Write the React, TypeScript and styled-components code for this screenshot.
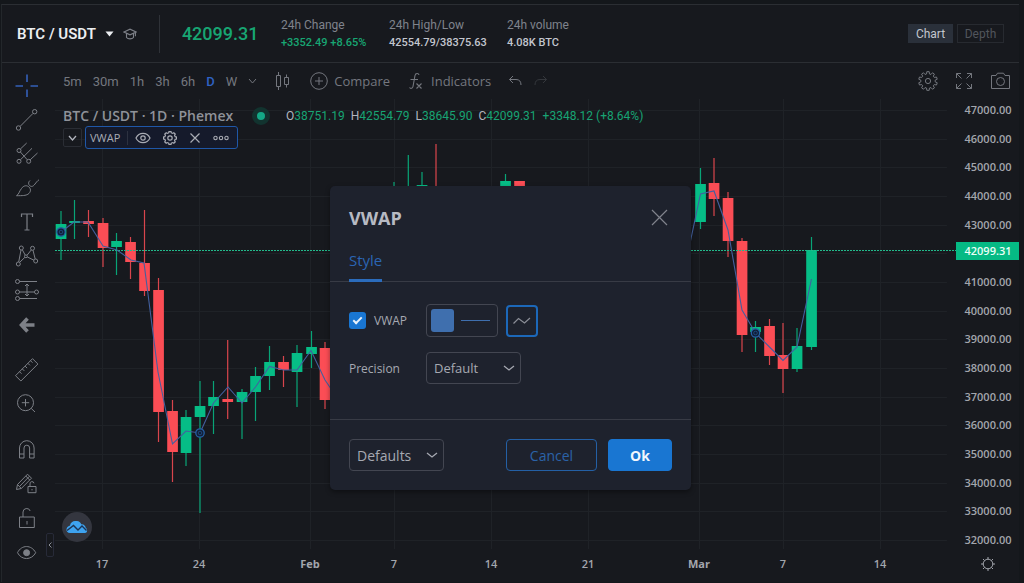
import React from "react";
import styled, { createGlobalStyle } from "styled-components";

const ui = '"Open Sans", "Noto Sans", sans-serif';
const din = 'Roboto, "Liberation Sans", sans-serif';

const GlobalStyle = createGlobalStyle`
  *, *::before, *::after { box-sizing: border-box; }
  body { margin: 0; background: #14171b; color: #b2b5be; font-family: ${ui}; font-size: 12px; }
  button, select, input { font: inherit; color: inherit; margin: 0; }
  button { background: none; border: 0; padding: 0; display: inline-flex; align-items: center; justify-content: center; cursor: pointer; }
  h1, h2, p, dl, dd, dt { margin: 0; font-weight: inherit; font-size: inherit; }
  svg { display: block; flex: none; }
`;

const Page = styled.div`
  min-height: 100vh;
  padding: 4px 5px 1px 1px;
  display: flex;
  position: relative;
`;

const Panel = styled.main`
  flex: 1;
  min-width: 0;
  display: flex;
  flex-direction: column;
  background: #17191e;
  border-top: 1px solid #2b2e33;
  border-left: 1px solid #23272b;
`;

const Header = styled.header`
  height: 58px;
  display: flex;
  align-items: center;
  padding-left: 15px;
  padding-right: 15px;
  border-bottom: 1px solid #2b2e33;
  font-family: ${din};
`;

const PairButton = styled.button`
  gap: 9px;
  font-size: 15px;
  font-weight: 600;
  color: #eceef1;
`;

const HeaderDivider = styled.span`
  width: 1px;
  height: 38px;
  margin-left: 22px;
  background: #2f3238;
`;

const LastPrice = styled.strong`
  width: 77px;
  margin-left: 22px;
  font-size: 18px;
  font-weight: 500;
  color: #17a673;
`;

const Stats = styled.dl`
  display: flex;
  gap: 22px;
  margin-left: 22px;
`;

const Stat = styled.div<{ $up?: boolean; $wide?: boolean }>`
  width: ${(p) => (p.$wide ? 96 : 86)}px;
  white-space: nowrap;
  dt { font-size: 12px; line-height: 18px; color: #7f838c; }
  dd { font-size: 11px; line-height: 18px; font-weight: 500; color: ${(p) => (p.$up ? "#17a673" : "#c3c6ce")}; }
`;

const ViewSwitch = styled.div`
  display: flex;
  gap: 4px;
  margin-left: auto;
`;

const ViewButton = styled.button<{ $active?: boolean }>`
  height: 19px;
  width: ${(p) => (p.$active ? 45 : 47)}px;
  font-size: 12px;
  border: 1px solid ${(p) => (p.$active ? "#2a303a" : "#272a30")};
  background: ${(p) => (p.$active ? "#2a303a" : "transparent")};
  color: ${(p) => (p.$active ? "#c3c6ce" : "#51555c")};
`;

const Workspace = styled.div`
  flex: 1;
  display: flex;
`;

const Tools = styled.nav`
  width: 53px;
  padding: 6px 0 0 8px;
  display: flex;
  flex-direction: column;
  gap: 12px;
  color: #7d8087;
`;

const ToolGroup = styled.div`
  display: flex;
  flex-direction: column;
`;

const ToolButton = styled.button<{ $active?: boolean }>`
  width: 34px;
  height: 34px;
  color: ${(p) => (p.$active ? "#3560b8" : "inherit")};
`;

const ChartColumn = styled.section`
  flex: 1;
  min-width: 0;
  display: flex;
  flex-direction: column;
`;

const ChartToolbar = styled.div`
  height: 36px;
  display: flex;
  align-items: center;
  padding: 0 8px;
  color: #74777e;
  font-size: 13px;
`;

const Intervals = styled.div`
  display: flex;
  gap: 11px;
  font-family: ${din};
  font-size: 13px;
`;

const Interval = styled.button<{ $active?: boolean }>`
  color: ${(p) => (p.$active ? "#2f62c4" : "inherit")};
  font-weight: ${(p) => (p.$active ? 500 : 400)};
`;

const ToolbarGroup = styled.div<{ $gap: number; $start?: number }>`
  display: flex;
  align-items: center;
  gap: ${(p) => p.$gap}px;
  margin-left: ${(p) => (p.$start ? p.$start + "px" : "auto")};
`;

const LabelButton = styled.button`
  gap: 6px;
`;

const ChartBody = styled.div`
  flex: 1;
  display: flex;
`;

const Plot = styled.div`
  flex: 1;
  min-width: 0;
  position: relative;
`;

const PlotSvg = styled.svg`
  width: 100%;
  height: 478px;
  text { font: 600 11px ${ui}; fill: #a3a6ad; text-anchor: middle; }
  .month { font-weight: 700; }
`;

const Legend = styled.div`
  position: absolute;
  top: 7px;
  left: 8px;
  display: flex;
  flex-direction: column;
  gap: 3px;
`;

const LegendRow = styled.div`
  display: flex;
  align-items: center;
  height: 19px;
  white-space: nowrap;
`;

const Symbol = styled.h1`
  width: 189px;
  font-size: 14px;
  font-weight: 600;
  color: #8f9299;
`;

const StatusDot = styled.span`
  width: 18px;
  height: 18px;
  border-radius: 50%;
  border: 5px solid #12332f;
  background: #14a886;
`;

const Ohlc = styled.p`
  display: flex;
  gap: 6px;
  margin-left: 16px;
  font-family: ${din};
  font-size: 12px;
  color: #18a474;
  b { font-weight: 400; color: #b2b5be; }
`;

const StudyToggle = styled.button`
  width: 19px;
  height: 19px;
  border: 1px solid #2a2d34;
  border-radius: 2px;
  color: #b2b5be;
`;

const Study = styled.div`
  display: flex;
  align-items: center;
  gap: 12px;
  width: 153px;
  height: 23px;
  margin-left: 3px;
  padding-left: 4px;
  border: 1px solid #1f57a8;
  border-radius: 3px;
  background: #151a2b;
  color: #a9acb4;
`;

const StudyName = styled.span`
  width: 38px;
  margin-right: -5px;
  border-right: 1px solid #2c3140;
  font-size: 11px;
  line-height: 14px;
`;

const Brand = styled.a`
  position: absolute;
  left: 7px;
  top: 413px;
  width: 30px;
  height: 30px;
  display: grid;
  place-items: center;
  border-radius: 50%;
  background: #34363f;
`;

const CollapseHandle = styled.button`
  position: absolute;
  left: -9px;
  top: 434px;
  width: 8px;
  height: 24px;
  border: 1px solid #272a38;
  border-radius: 2px;
  color: #8b8e96;
`;

const PriceAxis = styled.aside`
  position: relative;
  width: 63px;
  padding-top: 3px;
  display: flex;
  flex-direction: column;
  align-items: center;
  color: #a3a6ad;
  font-size: 11px;
  font-weight: 600;
`;

const PriceScale = styled.ol`
  list-style: none;
  margin: 0 0 8px;
  padding: 0 0 0 1px;
  height: 446px;
  display: flex;
  flex-direction: column;
  justify-content: space-between;
  line-height: 16px;
  li { height: 16px; }
`;

const PriceBadge = styled.output`
  position: absolute;
  top: 143px;
  left: 0;
  right: 0;
  padding-left: 1px;
  text-align: center;
  line-height: 18px;
  background: #05ba84;
  color: #eafff7;
`;

const Dialog = styled.section`
  position: absolute;
  left: calc(50% - 182px);
  top: 186px;
  width: 361px;
  border-radius: 5px;
  background: #1e222d;
  box-shadow: 0 2px 5px rgba(0, 0, 0, 0.4);
  color: #a6a9b2;
`;

const DialogHead = styled.div`
  display: flex;
  align-items: center;
  justify-content: space-between;
  height: 63px;
  padding: 0 23px 0 19px;
`;

const DialogTitle = styled.h2`
  font-size: 18px;
  font-weight: 700;
  color: #b7bac3;
`;

const CloseButton = styled.button`
  color: #80838c;
`;

const Tabs = styled.div`
  height: 33px;
  padding-left: 19px;
  display: flex;
  border-bottom: 1px solid #383b45;
`;

const Tab = styled.button`
  height: 33px;
  padding-bottom: 9px;
  border-bottom: 3px solid #2b6cbc;
  color: #2b65b3;
  font-size: 15px;
`;

const Fields = styled.div`
  display: flex;
  flex-direction: column;
  gap: 15px;
  padding: 22px 19px 35px;
  border-bottom: 1px solid #383b45;
`;

const Field = styled.div`
  display: flex;
  align-items: center;
  gap: 8px;
`;

const FieldLabel = styled.label`
  display: flex;
  align-items: center;
  gap: 8px;
  width: 69px;
  font-size: 12px;
`;

const CheckBox = styled.input`
  appearance: none;
  flex: none;
  width: 17px;
  height: 17px;
  border-radius: 3px;
  background: #1976d2;
  display: grid;
  place-items: center;
  &:checked::after {
    content: "";
    width: 9px;
    height: 5px;
    margin-bottom: 3px;
    border: solid #e8f1fb;
    border-width: 0 0 2px 2px;
    transform: rotate(-45deg);
  }
`;

const ColorButton = styled.button`
  width: 72px;
  height: 33px;
  gap: 7px;
  justify-content: flex-start;
  padding-left: 4px;
  border: 1px solid #434651;
  border-radius: 4px;
`;

const Swatch = styled.span`
  width: 23px;
  height: 23px;
  border-radius: 3px;
  background: #3f6fae;
`;

const LineSample = styled.span`
  width: 29px;
  height: 1px;
  background: #3f6fae;
`;

const PlotTypeButton = styled.button`
  width: 32px;
  height: 32px;
  border: 2px solid #1c68b9;
  border-radius: 4px;
  color: #8b8e97;
`;

const SelectBox = styled.div<{ $size: number }>`
  display: grid;
  align-items: center;
  width: 95px;
  font-size: ${(p) => p.$size}px;
  select, svg { grid-area: 1 / 1; }
  select {
    appearance: none;
    width: 100%;
    height: 32px;
    padding: 0 7px;
    border: 1px solid #434651;
    border-radius: 4px;
    background: transparent;
  }
  svg { justify-self: end; margin-right: 6px; pointer-events: none; }
`;

const DialogFoot = styled.div`
  display: flex;
  align-items: center;
  gap: 11px;
  height: 70px;
  padding: 0 19px;
`;

const ActionButton = styled.button<{ $primary?: boolean }>`
  height: 32px;
  width: ${(p) => (p.$primary ? 64 : 91)}px;
  margin-left: ${(p) => (p.$primary ? "0" : "auto")};
  border: 1px solid ${(p) => (p.$primary ? "#1976d2" : "#2460a5")};
  border-radius: 4px;
  background: ${(p) => (p.$primary ? "#1976d2" : "transparent")};
  color: ${(p) => (p.$primary ? "#f2f7fd" : "#2b62a8")};
  font-size: 14px;
  font-weight: ${(p) => (p.$primary ? 700 : 400)};
`;

type IconProps = { w?: number; h?: number; s?: number; children: React.ReactNode };
const Icon = ({ w = 28, h = w, s = 1, children }: IconProps) => (
  <svg width={w} height={h} viewBox={`0 0 ${w} ${h}`} fill="none" stroke="currentColor" strokeWidth={s} aria-hidden="true">
    {children}
  </svg>
);

const Chevron = ({ w = 12, s = 1.3 }: { w?: number; s?: number }) => (
  <Icon w={w} h={8} s={s}>
    <path d={`M1 2 L${w / 2} 6 L${w - 1} 2`} />
  </Icon>
);

type Tool = { name: string; art: React.ReactNode; s?: number };
const toolGroups: Tool[][] = [
  [
    { name: "Cross", s: 1.6, art: <path d="M14 2.5V10M14 17.5V25M2.5 14H10M17.5 14H25" /> },
    { name: "Trend line", art: <><circle cx="5.5" cy="22" r="2.2" /><circle cx="21.7" cy="5.7" r="2.2" /><path d="M7.2 20.3L20 7.4" /></> },
    { name: "Pitchfork", art: <><circle cx="6" cy="10.5" r="2" /><circle cx="6" cy="21.3" r="2" /><circle cx="15.7" cy="21.3" r="2" /><path d="M7.4 19.8L19 8.3M7.4 12L14.3 19.8M7.4 9L13.7 3M17.2 19.8L24.5 13" /></> },
    { name: "Brush", art: <><path d="M3.5 21.7C6 20.5 6 17.5 8.5 14.5C10.5 11.4 14 10.9 16.2 13.2C18.3 15.4 17.7 18.4 15 20.2C12.8 21.6 9.5 21.7 3.5 21.7Z" /><path d="M17 6.5C14.8 8.3 15.3 11.8 18.3 12.4C21.3 12.8 22.5 8 26 5.8" /></> },
    { name: "Text", s: 1.2, art: <path d="M8.5 9V6H19.5V9M14 6V22M11.5 22H16.5" /> },
    { name: "Patterns", art: <><circle cx="5.3" cy="22" r="2" /><circle cx="8.3" cy="6" r="2" /><circle cx="19.5" cy="6.3" r="2" /><circle cx="22.7" cy="19" r="2" /><circle cx="12.9" cy="14.3" r="1.4" /><path d="M5.7 20L8 8M9.3 7.8L12.2 13.1M14 13.3L18.3 7.9M20 8.3L22.2 17M6.6 20.4L11.9 15.3M14.2 14.9L20.9 18.2" /></> },
    { name: "Forecasting", art: <><circle cx="4.5" cy="5.5" r="2" /><circle cx="4.5" cy="16" r="2" /><circle cx="23.5" cy="16" r="2" /><circle cx="4.5" cy="22.5" r="2" /><path d="M6.5 5.5H24M6.5 16H21.5M6.5 22.5H24M14 8V20M12 10L14 8L16 10M12 18L14 20L16 18" /></> },
    { name: "Hide icons", s: 3.6, art: <path d="M21.5 15H9M14.5 8.5L8.5 15L14.5 21.5" /> },
  ],
  [
    { name: "Measure", art: <path d="M2.5 19.7L19.5 2.7L24.9 8L7.9 25ZM6.5 15.7L8.5 17.7M9.3 12.9L11.3 14.9M12.1 10.1L14.1 12.1M14.9 7.3L16.9 9.3M17.5 4.7L19.5 6.7" /> },
    { name: "Zoom in", art: <><circle cx="12.5" cy="12.7" r="8" /><path d="M18.2 18.4L22 22M12.5 9V16.4M8.8 12.7H16.2" /></> },
  ],
  [
    { name: "Magnet", art: <path d="M6.5 22V12A7.3 7.3 0 0 1 21.1 12V22H16.6V12A2.8 2.8 0 0 0 11 12V22ZM6.5 18H11M16.6 18H21.1" /> },
    { name: "Stay in drawing mode", art: <><path d="M3.5 19.5L4.5 14.5L14.5 4.2L18.5 8.2L8.3 18.5ZM4.5 14.5L8.3 18.5M6.5 16.5L16.5 6.2M12.8 6L16.7 10" /><path d="M15 16.5H23V22.7H15ZM17 16.5V14A2 2 0 0 1 21 13.3M19 19V20.4" /></> },
    { name: "Lock drawings", art: <path d="M6.5 13H21.3V23.5H6.5ZM10 13V8A3.7 3.7 0 0 1 17.2 7M14 17V20.5" /> },
    { name: "Hide drawings", art: <><path d="M4.5 14.7C8.5 6.5 18.5 6.5 22.7 14.7C18.5 22.5 8.5 22.5 4.5 14.7Z" /><circle cx="13.6" cy="14.7" r="3" fill="currentColor" /></> },
  ],
];

const gearPath = (cx: number, cy: number, r: number, R: number, n: number) => {
  const pts: string[] = [];
  for (let i = 0; i < n; i++) {
    const step = (Math.PI * 2) / n;
    const a = i * step - Math.PI / 2;
    [[-0.32, r], [-0.2, R], [0.2, R], [0.32, r]].forEach(([k, q]) => {
      pts.push(`${(cx + Math.cos(a + k * step) * q).toFixed(2)} ${(cy + Math.sin(a + k * step) * q).toFixed(2)}`);
    });
  }
  return `M${pts.join("L")}Z`;
};

/* Centre x, high, body top, body bottom, low, rising */
type Candle = [number, number, number, number, number, boolean];
const candles: Candle[] = [
  [61, 211, 224, 239, 260, true], [74.5, 200, 221, 223, 239, true], [88.5, 210, 221, 224, 237, false],
  [103, 218, 223, 248, 267, false], [116.5, 233, 241, 247, 275, true], [130.5, 237, 242, 262, 279, false],
  [144.5, 210, 263, 291, 296, false], [158.5, 278, 290, 412, 442, false], [172.5, 400, 411, 452, 482, false],
  [186, 410, 417, 453, 466, true], [200, 381, 406, 417, 513, true], [213.5, 381, 397, 406, 434, true],
  [227.7, 340, 399, 402, 419, false], [242, 389, 392, 402, 439, true], [255.5, 367, 376, 392, 421, true],
  [269.5, 346, 362, 376, 390, true], [283.5, 356, 362, 370, 387, false], [297, 345, 353, 372, 407, true],
  [311.5, 331, 347, 354, 368, true], [325, 342, 348, 400, 409, false],
  [394, 182, 210, 240, 250, true], [408.3, 155, 190, 210, 230, true], [422, 172, 185, 190, 210, true],
  [436, 144, 188, 230, 240, false], [505.5, 174, 181, 230, 240, true], [519.5, 181, 181, 200, 240, false],
  [700.5, 168, 184, 222, 229, true], [714, 158, 183, 199, 216, false], [728, 192, 198, 241, 257, false],
  [742, 238, 241, 335, 352, false], [755.5, 321, 327, 332, 352, true], [769.5, 319, 326, 356, 365, false],
  [783, 323, 355, 369, 393, false], [797, 328, 346, 369, 372, true], [811.5, 237, 250, 347, 350, true],
];

const vwapLeft = "61,232 74,222 88,222 103,246 117,250 131,260 144,263 158,372 172.5,444 186,431 200,433 213.5,403 228,387 242,403 255.5,387 269.5,366.5 283.5,370 297,370 311,350.5 325,380 340,402";
const vwapRight = "686,262 700.5,194 714,191 728,230 742,310 755.5,333 769.5,347 783,360.5 797,347 811.5,279";
const anchors = [[61, 232], [200, 433], [755.5, 333]];

const dates: [number, string][] = [
  [102, "17"], [199, "24"], [310, "Feb"], [394, "7"], [491, "14"], [588, "21"], [699, "Mar"], [783, "7"], [880, "14"],
];

const prices = Array.from({ length: 16 }, (_, i) => 47000 - i * 1000);
/* The last-price badge takes the place of this scale label */
const coveredPrice = 42000;

const PriceChart = () => (
  <PlotSvg role="img" aria-label="BTC / USDT daily candles with VWAP">
    <g stroke="#1f2227">
      {prices.map((p, i) => {
        const y = Math.round(11 + i * 28.67) + 0.5;
        return <line key={p} x1="0" x2="99%" y1={y} y2={y} />;
      })}
    </g>
    <g transform="translate(-55 -99)">
      {dates.map(([x, label]) => (
        <g key={x}>
          <line x1={x + 0.5} x2={x + 0.5} y1="99" y2="549" stroke="#1f2227" />
          <text x={x} y="568" className={label.length > 2 ? "month" : undefined}>{label}</text>
        </g>
      ))}
      {candles.map(([x, high, top, bottom, low, up]) => (
        <g key={x} fill={up ? "#06bd86" : "#fb4d55"}>
          <rect x={x - 0.6} y={high} width="1.2" height={low - high} opacity="0.85" />
          <rect x={x - 5.3} y={top} width="10.7" height={bottom - top} />
        </g>
      ))}
    </g>
    <line x1="0" x2="100%" y1="151.5" y2="151.5" stroke="#22b98a" strokeDasharray="2 1" />
    <g transform="translate(-55 -99)" fill="none" stroke="#43609f" strokeWidth="1.1">
      <polyline points={vwapLeft} />
      <polyline points={vwapRight} />
      {anchors.map(([x, y]) => (
        <g key={x} stroke="#2560a4">
          <circle cx={x} cy={y} r="4.2" fill="#111e36" strokeWidth="1.3" />
          <circle cx={x} cy={y} r="1.8" strokeWidth="0.6" />
        </g>
      ))}
    </g>
  </PlotSvg>
);

const ohlcValues = [["O", "38751.19"], ["H", "42554.79"], ["L", "38645.90"], ["C", "42099.31"]];

export default function App() {
  return (
    <>
      <GlobalStyle />
      <Page>
        <Panel>
          <Header>
            <PairButton>
              BTC / USDT
              <svg width="9" height="6" viewBox="0 0 9 6" aria-hidden="true"><path d="M0.5 0.5H8.5L4.5 5.5Z" fill="#eceef1" /></svg>
              <Icon w={14} h={12} s={1.1}>
                <g stroke="#7d8088"><path d="M1 4L7 1.2L13 4L7 6.8ZM3.5 5.5V9.5C5 11.3 9 11.3 10.5 9.5V5.5M12.4 4.5V8.2" /></g>
              </Icon>
            </PairButton>
            <HeaderDivider />
            <LastPrice>42099.31</LastPrice>
            <Stats>
              <Stat $up><dt>24h Change</dt><dd>+3352.49 +8.65%</dd></Stat>
              <Stat $wide><dt>24h High/Low</dt><dd>42554.79/38375.63</dd></Stat>
              <Stat><dt>24h volume</dt><dd>4.08K BTC</dd></Stat>
            </Stats>
            <ViewSwitch>
              <ViewButton $active>Chart</ViewButton>
              <ViewButton>Depth</ViewButton>
            </ViewSwitch>
          </Header>

          <Workspace>
            <Tools aria-label="Drawing tools">
              {toolGroups.map((group, i) => (
                <ToolGroup key={i}>
                  {group.map((t) => (
                    <ToolButton key={t.name} aria-label={t.name} $active={t.name === "Cross"}>
                      <Icon s={t.s}>{t.art}</Icon>
                    </ToolButton>
                  ))}
                </ToolGroup>
              ))}
            </Tools>

            <ChartColumn>
              <ChartToolbar>
                <Intervals>
                  {["5m", "30m", "1h", "3h", "6h", "D", "W"].map((v) => (
                    <Interval key={v} $active={v === "D"}>{v}</Interval>
                  ))}
                  <Interval aria-label="More intervals"><Chevron w={9} s={1} /></Interval>
                </Intervals>
                <ToolbarGroup $gap={20} $start={18}>
                  <button aria-label="Candles">
                    <Icon w={15} h={18}>
                      <path d="M1.5 3.5H5.5V14.5H1.5ZM3.5 0V3.5M3.5 14.5V18M9.5 5.5H13.5V12.5H9.5ZM11.5 2.5V5.5M11.5 12.5V15.5" />
                    </Icon>
                  </button>
                  <LabelButton>
                    <Icon w={18}><circle cx="9" cy="9" r="8.3" /><path d="M9 5V13M5 9H13" /></Icon>
                    Compare
                  </LabelButton>
                </ToolbarGroup>
                <ToolbarGroup $gap={16} $start={18}>
                  <LabelButton>
                    <Icon w={17} h={18} s={1.1}>
                      <path d="M11 3C10.6 1.2 7.6 0.8 7 3.5L5 14.5C4.6 16.6 2.5 16.8 1.5 15.5M2.5 7.5H10M8.5 11.5L13.5 16.5M13.5 11.5L8.5 16.5" />
                    </Icon>
                    Indicators
                  </LabelButton>
                  <ToolbarGroup $gap={12} $start={1}>
                    <button aria-label="Undo"><Icon w={14} h={12}><path d="M5 1L1.5 4.5L5 8M1.5 4.5H8C11.5 4.5 13 6.5 13 10" /></Icon></button>
                    <button aria-label="Redo" disabled><Icon w={14} h={12}><path stroke="#34373c" d="M9 1L12.5 4.5L9 8M12.5 4.5H6C2.5 4.5 1 6.5 1 10" /></Icon></button>
                  </ToolbarGroup>
                </ToolbarGroup>
                <ToolbarGroup $gap={17}>
                  <button aria-label="Settings"><Icon w={20}><path d={gearPath(10, 10, 7.2, 9.4, 10)} /><circle cx="10" cy="10" r="2.6" /></Icon></button>
                  <button aria-label="Full screen">
                    <Icon w={18}><path d="M1.5 6V1.5H6M1.5 1.5L6.5 6.5M12 1.5H16.5V6M16.5 1.5L11.5 6.5M1.5 12V16.5H6M1.5 16.5L6.5 11.5M16.5 12V16.5H12M16.5 16.5L11.5 11.5" /></Icon>
                  </button>
                  <button aria-label="Take a snapshot">
                    <Icon w={21} h={18}><path d="M1.5 3.5H6L7.5 1.2H13.5L15 3.5H19.5V16.5H1.5Z" /><circle cx="10.5" cy="9.5" r="4" /></Icon>
                  </button>
                </ToolbarGroup>
              </ChartToolbar>

              <ChartBody>
                <Plot>
                  <PriceChart />
                  <Legend>
                    <LegendRow>
                      <Symbol>BTC / USDT · 1D · Phemex</Symbol>
                      <StatusDot />
                      <Ohlc>
                        {ohlcValues.map(([k, v]) => <span key={k}><b>{k}</b>{v}</span>)}
                        <span>+3348.12 (+8.64%)</span>
                      </Ohlc>
                    </LegendRow>
                    <LegendRow>
                      <StudyToggle aria-label="Collapse legend"><Chevron w={9} /></StudyToggle>
                      <Study>
                        <StudyName>VWAP</StudyName>
                        <button aria-label="Hide"><Icon w={16} h={12} s={1.2}><path d="M1 6C4 -0.2 12 -0.2 15 6C12 12.2 4 12.2 1 6Z" /><circle cx="8" cy="6" r="2.2" /></Icon></button>
                        <button aria-label="Study settings"><Icon w={14} s={1.2}><path d={gearPath(7, 7, 5.3, 6.5, 8)} /><circle cx="7" cy="7" r="2.2" /></Icon></button>
                        <button aria-label="Remove"><Icon w={12} s={1.2}><path d="M1.5 1.5L10.5 10.5M10.5 1.5L1.5 10.5" /></Icon></button>
                        <button aria-label="More"><Icon w={16} h={6} s={1.1}><circle cx="2.5" cy="3" r="1.7" /><circle cx="8" cy="3" r="1.7" /><circle cx="13.5" cy="3" r="1.7" /></Icon></button>
                      </Study>
                    </LegendRow>
                  </Legend>
                  <Brand href="#" aria-label="Charting library">
                    <svg width="22" height="14" viewBox="0 0 22 14" aria-hidden="true">
                      <path d="M0.5 9C1 6.5 3 6 4 5.5C4.5 2 7.5 0.5 10 1C12.5 0.5 14.5 2 15.3 4.2C18 4 19.5 6 19.7 7.8C21.5 9 22 13 19 13H4C1.5 13 0 11 0.5 9Z" fill="#3ea3f0" />
                      <path d="M1 10.5L7.5 5.5L12 10L16 6L20.5 10.5" fill="none" stroke="#1d3352" strokeWidth="1.4" />
                    </svg>
                  </Brand>
                  <CollapseHandle aria-label="Hide drawing toolbar">
                    <Icon w={4} h={8}><path d="M3.5 1.5L1 4L3.5 6.5" /></Icon>
                  </CollapseHandle>
                </Plot>
                <PriceAxis>
                  <PriceScale>
                    {prices.map((p) => <li key={p}>{p === coveredPrice ? null : p.toFixed(2)}</li>)}
                  </PriceScale>
                  <PriceBadge>42099.31</PriceBadge>
                  <button aria-label="Scale settings">
                    <Icon w={16}>
                      <circle cx="8" cy="8" r="4.8" />
                      <path d="M8 1V3.2M8 12.8V15M1 8H3.2M12.8 8H15M3 3L4.6 4.6M11.4 11.4L13 13M13 3L11.4 4.6M4.6 11.4L3 13" />
                    </Icon>
                  </button>
                </PriceAxis>
              </ChartBody>
            </ChartColumn>
          </Workspace>
        </Panel>

        <Dialog role="dialog" aria-labelledby="dialog-title">
          <DialogHead>
            <DialogTitle id="dialog-title">VWAP</DialogTitle>
            <CloseButton aria-label="Close"><Icon w={17} s={1.2}><path d="M1 1L16 16M16 1L1 16" /></Icon></CloseButton>
          </DialogHead>
          <Tabs role="tablist"><Tab role="tab" aria-selected="true">Style</Tab></Tabs>
          <Fields>
            <Field>
              <FieldLabel><CheckBox type="checkbox" defaultChecked />VWAP</FieldLabel>
              <ColorButton aria-label="Line colour"><Swatch /><LineSample /></ColorButton>
              <PlotTypeButton aria-label="Plot type"><Icon w={20} h={10} s={1.2}><path d="M1.5 7.5L6.5 2.5L12.5 7L18 2" /></Icon></PlotTypeButton>
            </Field>
            <Field>
              <FieldLabel htmlFor="precision">Precision</FieldLabel>
              <SelectBox $size={13}>
                <select id="precision"><option>Default</option></select>
                <Chevron />
              </SelectBox>
            </Field>
          </Fields>
          <DialogFoot>
            <SelectBox $size={14}>
              <select aria-label="Template"><option>Defaults</option></select>
              <Chevron />
            </SelectBox>
            <ActionButton>Cancel</ActionButton>
            <ActionButton $primary>Ok</ActionButton>
          </DialogFoot>
        </Dialog>
      </Page>
    </>
  );
}
